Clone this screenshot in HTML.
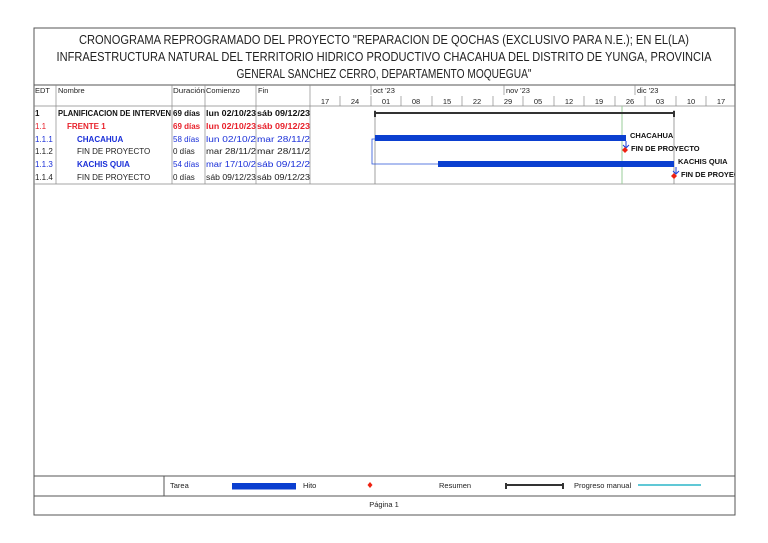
<!DOCTYPE html>
<html><head><style>body{margin:0;background:#fff}svg{display:block}</style></head><body>
<svg width="768" height="543" xmlns="http://www.w3.org/2000/svg" font-family="Liberation Sans, sans-serif">
<rect x="34" y="28" width="701" height="487" fill="none" stroke="#555" stroke-width="1"/>
<g font-size="12.5" fill="#222" text-anchor="middle">
<text x="384" y="44" textLength="610" lengthAdjust="spacingAndGlyphs">CRONOGRAMA REPROGRAMADO DEL PROYECTO "REPARACION DE QOCHAS (EXCLUSIVO PARA N.E.); EN EL(LA)</text>
<text x="384" y="61" textLength="655" lengthAdjust="spacingAndGlyphs">INFRAESTRUCTURA NATURAL DEL TERRITORIO HIDRICO PRODUCTIVO CHACAHUA DEL DISTRITO DE YUNGA, PROVINCIA</text>
<text x="384" y="78" textLength="295" lengthAdjust="spacingAndGlyphs">GENERAL SANCHEZ CERRO, DEPARTAMENTO MOQUEGUA"</text>
</g>
<line x1="34" y1="85" x2="735" y2="85" stroke="#555"/>
<line x1="34" y1="106" x2="735" y2="106" stroke="#888" stroke-width="0.7"/>
<g stroke="#888" stroke-width="0.7">
<line x1="56" y1="85" x2="56" y2="184"/><line x1="172" y1="85" x2="172" y2="184"/><line x1="205" y1="85" x2="205" y2="184"/><line x1="256" y1="85" x2="256" y2="184"/>
<line x1="310" y1="85" x2="310" y2="184"/>
<line x1="34" y1="184" x2="735" y2="184"/>
<line x1="371" y1="85" x2="371" y2="95"/><line x1="504" y1="85" x2="504" y2="95"/><line x1="635" y1="85" x2="635" y2="95"/>
<line x1="340" y1="96" x2="340" y2="106"/><line x1="371" y1="96" x2="371" y2="106"/><line x1="401" y1="96" x2="401" y2="106"/><line x1="432" y1="96" x2="432" y2="106"/><line x1="462" y1="96" x2="462" y2="106"/><line x1="493" y1="96" x2="493" y2="106"/><line x1="523" y1="96" x2="523" y2="106"/><line x1="554" y1="96" x2="554" y2="106"/><line x1="584" y1="96" x2="584" y2="106"/><line x1="615" y1="96" x2="615" y2="106"/><line x1="645" y1="96" x2="645" y2="106"/><line x1="676" y1="96" x2="676" y2="106"/><line x1="706" y1="96" x2="706" y2="106"/>
</g>
<g font-size="7.5" fill="#222">
<text x="35" y="93">EDT</text><text x="58" y="93">Nombre</text><text x="173" y="93" textLength="32" lengthAdjust="spacingAndGlyphs">Duración</text><text x="206" y="93">Comienzo</text><text x="258" y="93">Fin</text>
<text x="373" y="93">oct '23</text><text x="506" y="93">nov '23</text><text x="637" y="93">dic '23</text>
</g>
<g font-size="7.5" fill="#222" text-anchor="middle">
<text x="325" y="104">17</text><text x="355" y="104">24</text><text x="386" y="104">01</text><text x="416" y="104">08</text><text x="447" y="104">15</text><text x="477" y="104">22</text><text x="508" y="104">29</text><text x="538" y="104">05</text><text x="569" y="104">12</text><text x="599" y="104">19</text><text x="630" y="104">26</text><text x="660" y="104">03</text><text x="691" y="104">10</text><text x="721" y="104">17</text>
</g>
<g font-size="8">
<g fill="#111" font-weight="bold"><text x="35" y="116">1</text><text x="58" y="116" textLength="113" lengthAdjust="spacingAndGlyphs">PLANIFICACION DE INTERVEN</text><text x="173" y="116">69 días</text><text x="206" y="116" textLength="50" lengthAdjust="spacingAndGlyphs">lun 02/10/23</text><text x="257" y="116" textLength="53" lengthAdjust="spacingAndGlyphs">sáb 09/12/23</text></g>
<g fill="#e8212b" font-weight="bold"><text x="35" y="129" font-weight="normal">1.1</text><text x="67" y="129">FRENTE 1</text><text x="173" y="129">69 días</text><text x="206" y="129" textLength="50" lengthAdjust="spacingAndGlyphs">lun 02/10/23</text><text x="257" y="129" textLength="53" lengthAdjust="spacingAndGlyphs">sáb 09/12/23</text></g>
<g fill="#1a2fd8"><text x="35" y="142">1.1.1</text><text x="77" y="142" font-weight="bold">CHACAHUA</text><text x="173" y="142">58 días</text><text x="206" y="142" textLength="50" lengthAdjust="spacingAndGlyphs">lun 02/10/2</text><text x="257" y="142" textLength="53" lengthAdjust="spacingAndGlyphs">mar 28/11/2</text></g>
<g fill="#222"><text x="35" y="154">1.1.2</text><text x="77" y="154">FIN DE PROYECTO</text><text x="173" y="154">0 días</text><text x="206" y="154" textLength="50" lengthAdjust="spacingAndGlyphs">mar 28/11/2</text><text x="257" y="154" textLength="53" lengthAdjust="spacingAndGlyphs">mar 28/11/2</text></g>
<g fill="#1a2fd8"><text x="35" y="167">1.1.3</text><text x="77" y="167" font-weight="bold">KACHIS QUIA</text><text x="173" y="167">54 días</text><text x="206" y="167" textLength="50" lengthAdjust="spacingAndGlyphs">mar 17/10/2</text><text x="257" y="167" textLength="53" lengthAdjust="spacingAndGlyphs">sáb 09/12/2</text></g>
<g fill="#222"><text x="35" y="180">1.1.4</text><text x="77" y="180">FIN DE PROYECTO</text><text x="173" y="180">0 días</text><text x="206" y="180" textLength="50" lengthAdjust="spacingAndGlyphs">sáb 09/12/23</text><text x="257" y="180" textLength="53" lengthAdjust="spacingAndGlyphs">sáb 09/12/23</text></g>
</g>
<!-- gantt -->
<line x1="375" y1="110" x2="375" y2="184" stroke="#888" stroke-width="0.8"/>
<line x1="674" y1="110" x2="674" y2="184" stroke="#888" stroke-width="0.8"/>
<line x1="622" y1="106" x2="622" y2="184" stroke="#9c9" stroke-width="1"/>
<rect x="375" y="112" width="299" height="2" fill="#333"/>
<rect x="374" y="111" width="2" height="6" fill="#333"/><rect x="673" y="111" width="2" height="6" fill="#333"/>
<rect x="375" y="135" width="251" height="6" fill="#0b3fd0"/>
<rect x="438" y="161" width="236" height="6" fill="#0b3fd0"/>
<path d="M375 139 H372 V164 H438" fill="none" stroke="#2a52d8" stroke-width="0.8"/>
<path d="M626 141 V147 M623 145 L626 148 L629 145" fill="none" stroke="#1a3fd8" stroke-width="1"/>
<path d="M676 167 V173 M673 171 L676 174 L679 171" fill="none" stroke="#1a3fd8" stroke-width="1"/>
<polygon points="625,147 628,150 625,153 622,150" fill="#e21"/>
<polygon points="674,173 677,176 674,179 671,176" fill="#e21"/>
<g font-size="7.5" font-weight="bold" fill="#111">
<text x="630" y="138">CHACAHUA</text><text x="631" y="151">FIN DE PROYECTO</text><text x="678" y="164">KACHIS QUIA</text>
<svg x="0" y="0" width="735" height="543"><text x="681" y="177">FIN DE PROYECTO</text></svg>
</g>
<!-- legend -->
<line x1="34" y1="476" x2="735" y2="476" stroke="#555"/>
<line x1="34" y1="496" x2="735" y2="496" stroke="#555"/>
<line x1="164" y1="476" x2="164" y2="496" stroke="#555"/>
<g font-size="7.5" fill="#222">
<text x="170" y="488">Tarea</text><text x="303" y="488">Hito</text><text x="439" y="488">Resumen</text><text x="574" y="488">Progreso manual</text>
<text x="384" y="507" text-anchor="middle">Página 1</text>
</g>
<rect x="232" y="483" width="64" height="6" fill="#0b3fd0"/><rect x="232" y="489" width="64" height="1" fill="#8aa0e8"/>
<polygon points="370,482 372.5,485 370,488 367.5,485" fill="#e21"/>
<rect x="505" y="484" width="58" height="2" fill="#333"/><rect x="505" y="483" width="2" height="6" fill="#333"/><rect x="562" y="483" width="2" height="6" fill="#333"/>
<line x1="638" y1="485" x2="701" y2="485" stroke="#2bb5c8" stroke-width="1.5"/>
</svg>
</body></html>
